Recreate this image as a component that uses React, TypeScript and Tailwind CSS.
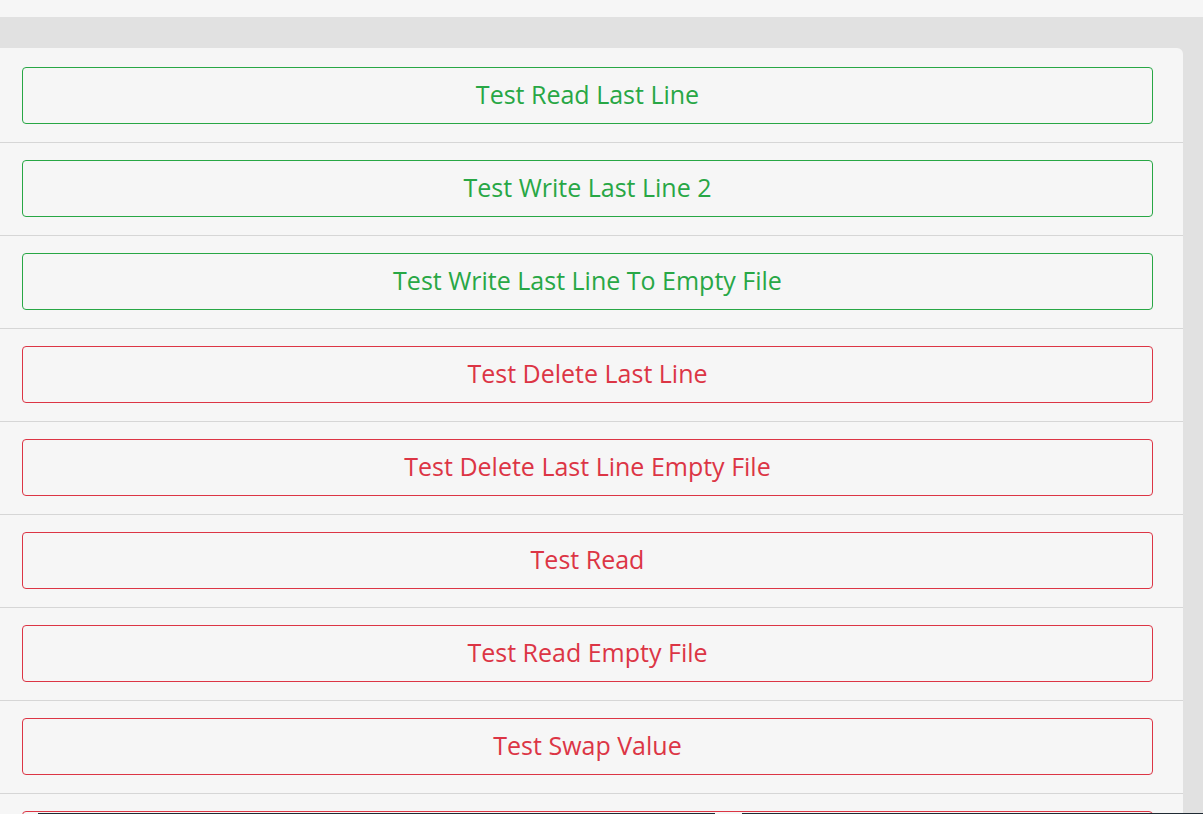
import React from 'react';

const tests = [
  { label: 'Test Read Last Line', passed: true },
  { label: 'Test Write Last Line 2', passed: true },
  { label: 'Test Write Last Line To Empty File', passed: true },
  { label: 'Test Delete Last Line', passed: false },
  { label: 'Test Delete Last Line Empty File', passed: false },
  { label: 'Test Read', passed: false },
  { label: 'Test Read Empty File', passed: false },
  { label: 'Test Swap Value', passed: false },
  { label: 'Test Swap Value Empty File', passed: false },
];

const App: React.FC = () => {
  return (
    <div className="relative h-[814px] overflow-hidden bg-[#f6f6f6] font-['Open_Sans',sans-serif]">
      <div className="mt-[17px] bg-[#e1e1e1] pt-[31px] pr-[20px]">
        <div className="rounded-tr-[6px] bg-[#f6f6f6] pt-[2px]">
          {tests.map((test, index) => (
            <div key={index} className="border-b border-[#d6d6d6] pl-[22px] pr-[30px] pt-[17px] pb-[18px]">
              <button
                className={
                  test.passed
                    ? 'flex h-[57px] w-full items-center justify-center rounded-[4px] border border-[#28a745] pb-[2px] text-[25px] text-[#28a745]'
                    : 'flex h-[57px] w-full items-center justify-center rounded-[4px] border border-[#dc3545] pb-[2px] text-[25px] text-[#dc3545]'
                }
              >
                {test.label}
              </button>
            </div>
          ))}
        </div>
      </div>
      <div className="absolute bottom-0 left-[38px] h-px w-[677px] bg-[#1f2a33]" />
      <div className="absolute bottom-0 left-[742px] right-0 h-px bg-[#1f2a33]" />
    </div>
  );
};

export default App;
